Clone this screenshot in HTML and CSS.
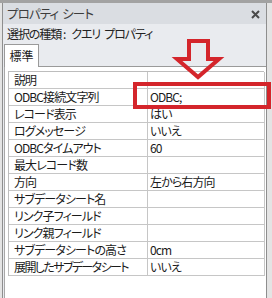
FILE: index.html
```html
<!DOCTYPE html>
<html lang="ja">
<head>
<meta charset="utf-8">
<link rel="stylesheet" href="styles.css">
</head>
<body>
<div class="page">
  <div class="topstrip"></div>
  <div class="frame">
    <div class="titlebar">
      <span class="title">プロパティ<span class="sp"></span>シート</span>
      <svg class="close" width="9" height="9" viewBox="0 0 9 9"><path d="M1 1L8 8M8 1L1 8" stroke="#4a4a4a" stroke-width="2"/></svg>
    </div>
    <div class="header">選択の種類<span class="colon">:</span><span class="sp wide"></span>クエリ<span class="sp"></span>プロパティ</div>
    <div class="tabs"><div class="tab">標準</div></div>
    <div class="panel">
      <div class="props">
        <div class="k">説明</div><div class="v"></div>
        <div class="k">ODBC接続文字列</div><div class="v">ODBC;</div>
        <div class="k">レコード表示</div><div class="v">はい</div>
        <div class="k">ログメッセージ</div><div class="v">いいえ</div>
        <div class="k">ODBCタイムアウト</div><div class="v">60</div>
        <div class="k">最大レコード数</div><div class="v"></div>
        <div class="k">方向</div><div class="v">左から右方向</div>
        <div class="k">サブデータシート名</div><div class="v"></div>
        <div class="k">リンク子フィールド</div><div class="v"></div>
        <div class="k">リンク親フィールド</div><div class="v"></div>
        <div class="k">サブデータシートの高さ</div><div class="v">0cm</div>
        <div class="k tight">展開したサブデータシート</div><div class="v">いいえ</div>
      </div>
    </div>
  </div>
  <svg class="annot" width="272" height="298" viewBox="0 0 272 298">
    <polygon points="189,41 208,41 208,59 219,59 198,77 177,59 189,59" fill="none" stroke="#d4252b" stroke-width="4" stroke-linejoin="miter"/>
    <rect x="135" y="84" width="134" height="23" fill="none" stroke="#d4252b" stroke-width="4"/>
  </svg>
</div>
</body>
</html>
```
FILE: styles.css
```css
html, body {
  margin: 0;
  padding: 0;
}
body {
  width: 272px;
  height: 298px;
  overflow: hidden;
  background: #e4e4e4;
  font-family: "Noto Sans CJK JP", "Noto Sans", sans-serif;
  font-size: 12px;
  color: #1b1b1b;
  font-feature-settings: "palt";
  letter-spacing: -0.9px;
}
.page {
  position: relative;
  width: 272px;
  height: 298px;
  display: flex;
  flex-direction: column;
}
.topstrip {
  height: 3px;
  background: #a2a2a2;
  flex: none;
}
.frame {
  flex: 1;
  margin-left: 2px;
  width: 265px;
  box-sizing: border-box;
  border-left: 1px solid #8e8e8e;
  border-right: 1px solid #8e8e8e;
  background: #e9ebef;
  display: flex;
  flex-direction: column;
}
.titlebar {
  height: 21px;
  background: #dadde2;
  display: flex;
  align-items: center;
  justify-content: space-between;
  padding: 0 6px 0 4px;
  flex: none;
}
.title {
  color: #3c3c3c;
  font-size: 12.5px;
  line-height: 21px;
}
.sp {
  display: inline-block;
  width: 4px;
}
.sp.wide {
  width: 6px;
}
.colon {
  margin-left: 2px;
}
.close {
  display: block;
  margin-top: 1px;
}
.header {
  height: 19px;
  line-height: 19px;
  padding-left: 4px;
  color: #222;
  letter-spacing: -1.1px;
  flex: none;
}
.tabs {
  height: 23px;
  display: flex;
  align-items: flex-end;
  padding-left: 1px;
  flex: none;
}
.tab {
  width: 35px;
  height: 23px;
  box-sizing: border-box;
  background: #fff;
  border: 1px solid #9a9a9a;
  border-bottom: none;
  text-align: center;
  line-height: 22px;
  margin-bottom: -1px;
  letter-spacing: 0;
  position: relative;
}
.panel {
  flex: 1;
  margin-left: 1px;
  background: #fff;
  border-top: 1px solid #9a9a9a;
  border-left: 1px solid #a8a8a8;
  padding: 4px 0 0 3px;
}
.props {
  display: grid;
  grid-template-columns: 139px 117px;
  border-top: 1px solid #bdbdbd;
  border-left: 1px solid #bdbdbd;
  width: 256px;
  box-sizing: border-box;
}
.props > div {
  height: 17px;
  box-sizing: border-box;
  border-bottom: 1px solid #c6c6c6;
  border-right: 1px solid #c6c6c6;
  line-height: 16px;
  white-space: nowrap;
  overflow: hidden;
}
.k {
  padding-left: 5px;
}
.k.tight {
  letter-spacing: -1.6px;
}
.v {
  padding-left: 2px;
}
.annot {
  position: absolute;
  left: 0;
  top: 0;
  pointer-events: none;
}
```
